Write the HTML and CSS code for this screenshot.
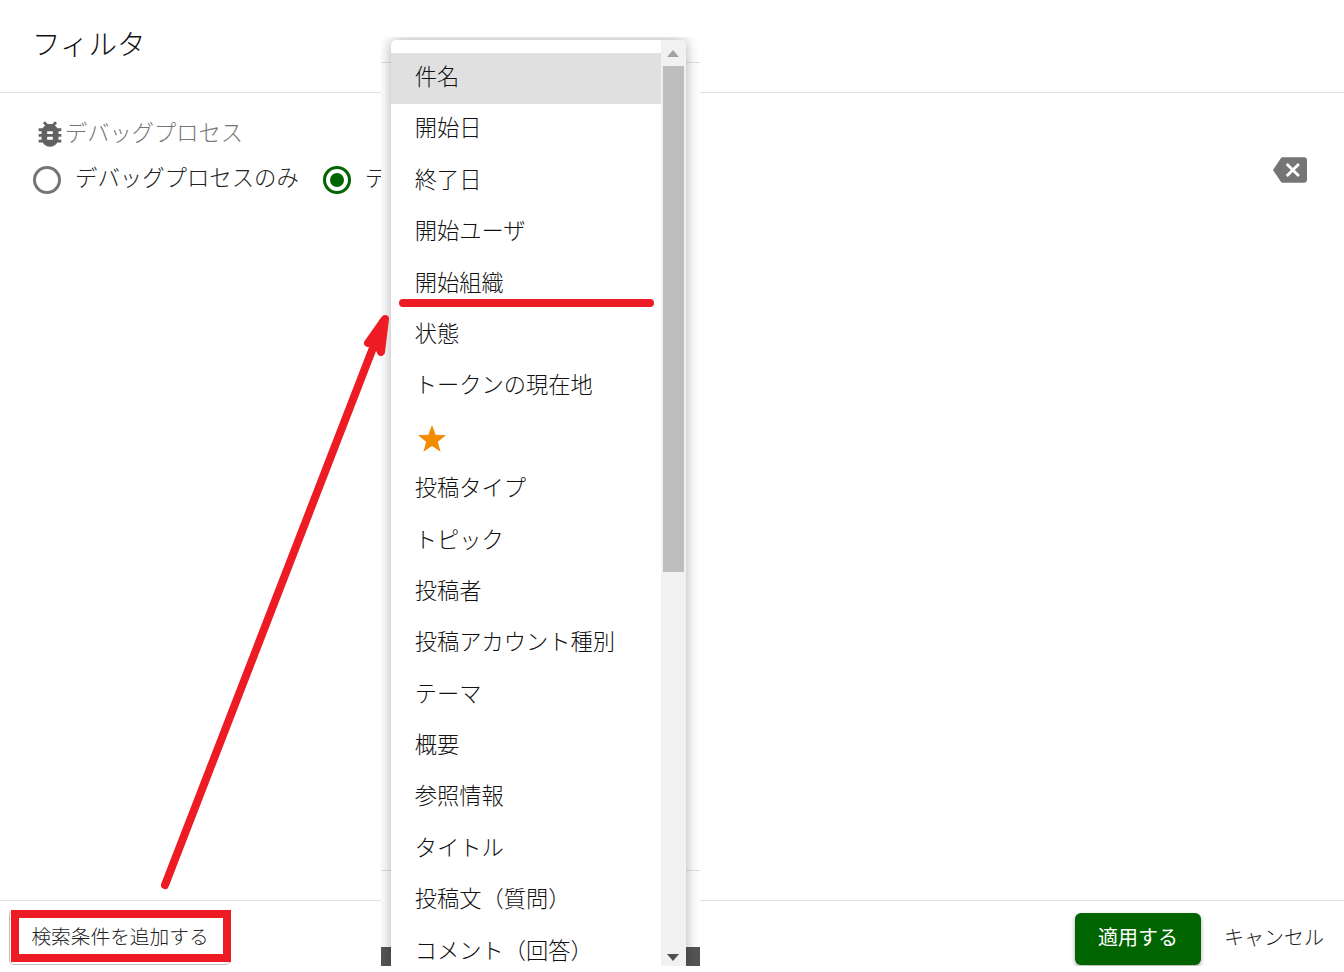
FILE: index.html
```html
<!DOCTYPE html>
<html lang="ja">
<head>
<meta charset="utf-8">
<title>フィルタ</title>
<link rel="stylesheet" href="styles.css">
</head>
<body>
<div class="page">
  <header class="head"><h1 class="title">フィルタ</h1></header>
  <main class="main">
    <div class="filter">
      <div class="filter-fields">
        <div class="field-label">
          <svg class="bug" viewBox="0 0 24 24"><path d="M20 8h-2.81c-.45-.78-1.07-1.45-1.82-1.96L17 4.41 15.59 3l-2.17 2.17C12.96 5.06 12.49 5 12 5c-.49 0-.96.06-1.41.17L8.41 3 7 4.41l1.62 1.63C7.88 6.55 7.26 7.22 6.81 8H4v2h2.09c-.05.33-.09.66-.09 1v1H4v2h2v1c0 .34.04.67.09 1H4v2h2.81c1.04 1.79 2.97 3 5.19 3s4.15-1.21 5.19-3H20v-2h-2.09c.05-.33.09-.66.09-1v-1h2v-2h-2v-1c0-.34-.04-.67-.09-1H20V8zm-6 8h-4v-2h4v2zm0-4h-4v-2h4v2z"/></svg>
          <span class="field-text">デバッグプロセス</span>
        </div>
        <div class="radios">
          <label class="radio"><span class="dot"></span><span class="radio-text">デバッグプロセスのみ</span></label>
          <label class="radio"><span class="dot on"></span><span class="radio-text">デバッグプロセスを除く</span></label>
        </div>
      </div>
      <svg class="clear" viewBox="0 0 24 24"><path d="M22 3H7c-.69 0-1.23.35-1.59.89L0 12l5.41 8.11c.36.54.9.89 1.59.89h15c1.1 0 2-.9 2-2V5c0-1.1-.9-2-2-2zm-3 12.59L17.59 17 14 13.41 10.41 17 9 15.59 12.59 12 9 8.41 10.41 7 14 10.59 17.59 7 19 8.41 15.41 12 19 15.59z"/></svg>
    </div>
  </main>
  <footer class="foot">
    <button class="add">検索条件を追加する</button>
    <div class="actions">
      <button class="apply">適用する</button>
      <button class="cancel">キャンセル</button>
    </div>
  </footer>
</div>

<div class="ghost">
  <i class="ghost-line top"></i>
  <i class="ghost-line low"></i>
  <i class="ghost-dark"></i>
  <div class="menu">
    <ul class="list">
      <li class="active">件名</li>
      <li>開始日</li>
      <li>終了日</li>
      <li>開始ユーザ</li>
      <li>開始組織</li>
      <li>状態</li>
      <li>トークンの現在地</li>
      <li><svg class="star" viewBox="0 0 28 27"><polygon points="14,0 17.6,9.7 28,10.2 19.8,16.7 22.6,26.8 14,21 5.4,26.8 8.2,16.7 0,10.2 10.4,9.7"/></svg></li>
      <li>投稿タイプ</li>
      <li>トピック</li>
      <li>投稿者</li>
      <li>投稿アカウント種別</li>
      <li>テーマ</li>
      <li>概要</li>
      <li>参照情報</li>
      <li>タイトル</li>
      <li>投稿文（質問）</li>
      <li>コメント（回答）</li>
    </ul>
    <div class="scroll">
      <i class="arrow up"></i>
      <i class="thumb"></i>
      <i class="arrow down"></i>
    </div>
  </div>
</div>

<div class="mark-box"></div>
<svg class="marks" viewBox="0 0 1344 966">
  <path class="m-thin" d="M165 885L383 322"/>
  <path class="m-head" d="M385 319L368 343L375 340L381 352Z"/>
  <path class="m-under" d="M403 303H650"/>
</svg>
</body>
</html>
```
FILE: styles.css
```css
* { box-sizing: border-box; }
html, body { margin: 0; padding: 0; background: #fff; }
body { font-family: "Noto Sans CJK JP", "Noto Sans", sans-serif; font-weight: 300; color: #111; }

.page { display: flex; flex-direction: column; height: 966px; }

.head { height: 93px; border-bottom: 1px solid #e0e0e0; padding: 23px 32px 0; flex: none; }
.title { margin: 0; font-size: 28.5px; font-weight: 300; line-height: 40px; color: #111; }

.main { flex: 1; min-height: 0; }
.filter { display: flex; justify-content: space-between; padding: 21px 37px 0 33px; }
.filter-fields { display: flex; flex-direction: column; }
.field-label { display: flex; align-items: center; height: 34px; color: #757575; font-size: 22.25px; }
.field-text { padding-bottom: 1px; }
.bug { width: 34px; height: 34px; fill: #616161; flex: none; margin-right: -2px; margin-top: 5px; }
.radios { display: flex; gap: 24px; margin-top: 18px; }
.radio { display: flex; align-items: center; height: 28px; font-size: 22.4px; color: #222; white-space: nowrap; }
.radio-text { padding-bottom: 8px; }
.dot { width: 28px; height: 28px; border: 3px solid #757575; border-radius: 50%; margin-right: 14px; display: flex; align-items: center; justify-content: center; flex: none; }
.dot.on { border-color: #006400; }
.dot.on::after { content: ""; width: 14px; height: 14px; border-radius: 50%; background: #006400; }
.clear { width: 34px; height: 34px; fill: #757575; margin-top: 39px; flex: none; }

.foot { height: 66px; border-top: 1px solid #e0e0e0; display: flex; justify-content: space-between; align-items: flex-start; flex: none; padding: 9px 20px 0 9px; }
button { font-family: inherit; font-weight: 300; cursor: pointer; }
.add { width: 222px; height: 55px; background: #fff; border: 1px solid #bdbdbd; border-radius: 5px; font-size: 19.7px; color: #222; padding: 0 0 4px; }
.actions { display: flex; align-items: center; gap: 23px; padding-top: 3px; }
.apply { width: 126px; height: 52px; background: #006400; border: 0; border-radius: 6px; color: #fff; font-size: 20px; font-weight: 400; padding: 0 0 6px; box-shadow: 0 2px 4px rgba(0,0,0,.35); }
.cancel { background: none; border: 0; padding: 0 0 6px; font-size: 20px; color: #222; }

.ghost { position: absolute; left: 381px; top: 37px; width: 319px; height: 929px; background: #fff; overflow: hidden; }
.ghost-line { position: absolute; left: 0; right: 0; height: 1px; background: #e0e0e0; }
.ghost-line.top { top: 25px; }
.ghost-line.low { top: 833px; }
.ghost-dark { position: absolute; left: 0; right: 0; top: 910px; bottom: 0; background: #555; }

.menu { position: absolute; left: 10px; top: 3px; width: 295px; height: 926px; background: #fff; border-radius: 5px 5px 0 0; box-shadow: 0 0 14px rgba(0,0,0,.32); display: flex; overflow: hidden; }
.list { list-style: none; margin: 0; padding: 13px 0 0; flex: 1; min-width: 0; overflow: hidden; }
.list li { height: 51.4px; display: flex; align-items: center; padding: 0 0 7.4px 23.7px; font-size: 22.25px; color: #111; white-space: nowrap; }
.list li.active { background: #e0e0e0; }
.star { width: 28px; height: 27px; fill: #f28b00; margin: 7px 0 0 3px; }

.scroll { width: 25px; flex: none; background: #f1f1f1; position: relative; }
.thumb { position: absolute; left: 2px; right: 2px; top: 26px; height: 506px; background: #bdbdbd; }
.arrow { position: absolute; left: 6px; width: 0; height: 0; border-left: 6.5px solid transparent; border-right: 6.5px solid transparent; }
.arrow.up { top: 10px; border-bottom: 7px solid #a3a3a3; }
.arrow.down { bottom: 5px; border-top: 7px solid #505050; }

.mark-box { position: absolute; left: 11px; top: 910px; width: 220px; height: 52px; border: 8px solid #ed1c24; }
.marks { position: absolute; left: 0; top: 0; width: 1344px; height: 966px; pointer-events: none; fill: none; stroke: #ed1c24; stroke-linecap: round; stroke-linejoin: round; }
.m-thin { stroke-width: 8px; }
.m-head { stroke-width: 8px; fill: #ed1c24; }
.m-under { stroke-width: 8px; }
```
